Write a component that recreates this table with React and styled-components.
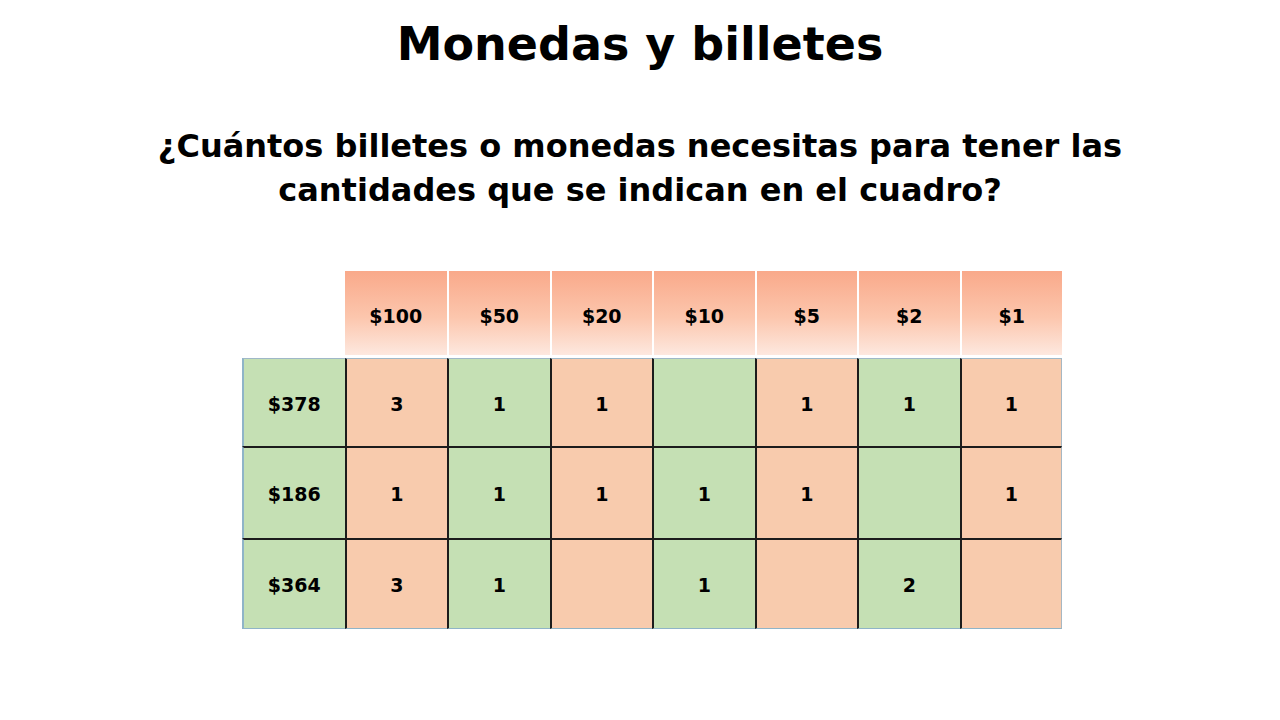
import styled, { createGlobalStyle } from "styled-components";

const GlobalStyle = createGlobalStyle`
  html, body {
    margin: 0;
    padding: 0;
    background: #ffffff;
  }
  body {
    font-family: "DejaVu Sans", "Liberation Sans", sans-serif;
    color: #000000;
  }
`;

const Slide = styled.div`
  width: 1280px;
  height: 720px;
  display: flex;
  flex-direction: column;
  align-items: center;
  overflow: hidden;
`;

const Title = styled.h1`
  margin: 13px 0 0;
  font-size: 46px;
  font-weight: 700;
  line-height: 62px;
`;

const Question = styled.h2`
  margin: 49px 0 0;
  width: 1100px;
  text-align: center;
  font-size: 32px;
  font-weight: 700;
  line-height: 44px;
`;

const Table = styled.div`
  margin: 59px 0 0 24px;
  display: grid;
  grid-template-columns: repeat(8, 102.5px);
  grid-template-rows: 87px 88px 92px 91px;
`;

const Corner = styled.div``;

const HeadCell = styled.div`
  display: flex;
  align-items: center;
  justify-content: center;
  padding-top: 5px;
  font-size: 19px;
  font-weight: 700;
  background: linear-gradient(180deg, #f9a98a 0%, #fcc6ad 55%, #fde8df 100%);
  border-left: 2px solid #ffffff;
  border-bottom: 3px solid #ffffff;
  &:nth-child(2) {
    border-left: none;
  }
`;

const Cell = styled.div`
  display: flex;
  align-items: center;
  justify-content: center;
  padding-top: 2px;
  font-size: 19px;
  font-weight: 700;
  background: ${(p) => (p.$green ? "#c5e0b4" : "#f8cbad")};
  border-left: 2px solid ${(p) => (p.$first ? "#8fb4c8" : "#1c1c1c")};
  border-top: ${(p) => (p.$top ? "1.5px solid #9fb8c8" : "2px solid #1c1c1c")};
  border-right: ${(p) => (p.$last ? "1.5px solid #a7b7c2" : "none")};
  border-bottom: ${(p) => (p.$bottom ? "1.5px solid #8fb4c8" : "none")};
`;

const heads = ["$100", "$50", "$20", "$10", "$5", "$2", "$1"];

const rows = [
  ["$378", "3", "1", "1", "", "1", "1", "1"],
  ["$186", "1", "1", "1", "1", "1", "", "1"],
  ["$364", "3", "1", "", "1", "", "2", ""],
];

export default function App() {
  return (
    <Slide>
      <GlobalStyle />
      <Title>Monedas y billetes</Title>
      <Question>
        ¿Cuántos billetes o monedas necesitas para tener las
        <br />
        cantidades que se indican en el cuadro?
      </Question>
      <Table>
        <Corner />
        {heads.map((h) => (
          <HeadCell key={h}>{h}</HeadCell>
        ))}
        {rows.map((row, r) =>
          row.map((v, c) => (
            <Cell
              key={`${r}-${c}`}
              $green={c % 2 === 0}
              $first={c === 0}
              $last={c === row.length - 1}
              $top={r === 0}
              $bottom={r === rows.length - 1}
            >
              {v}
            </Cell>
          ))
        )}
      </Table>
    </Slide>
  );
}
